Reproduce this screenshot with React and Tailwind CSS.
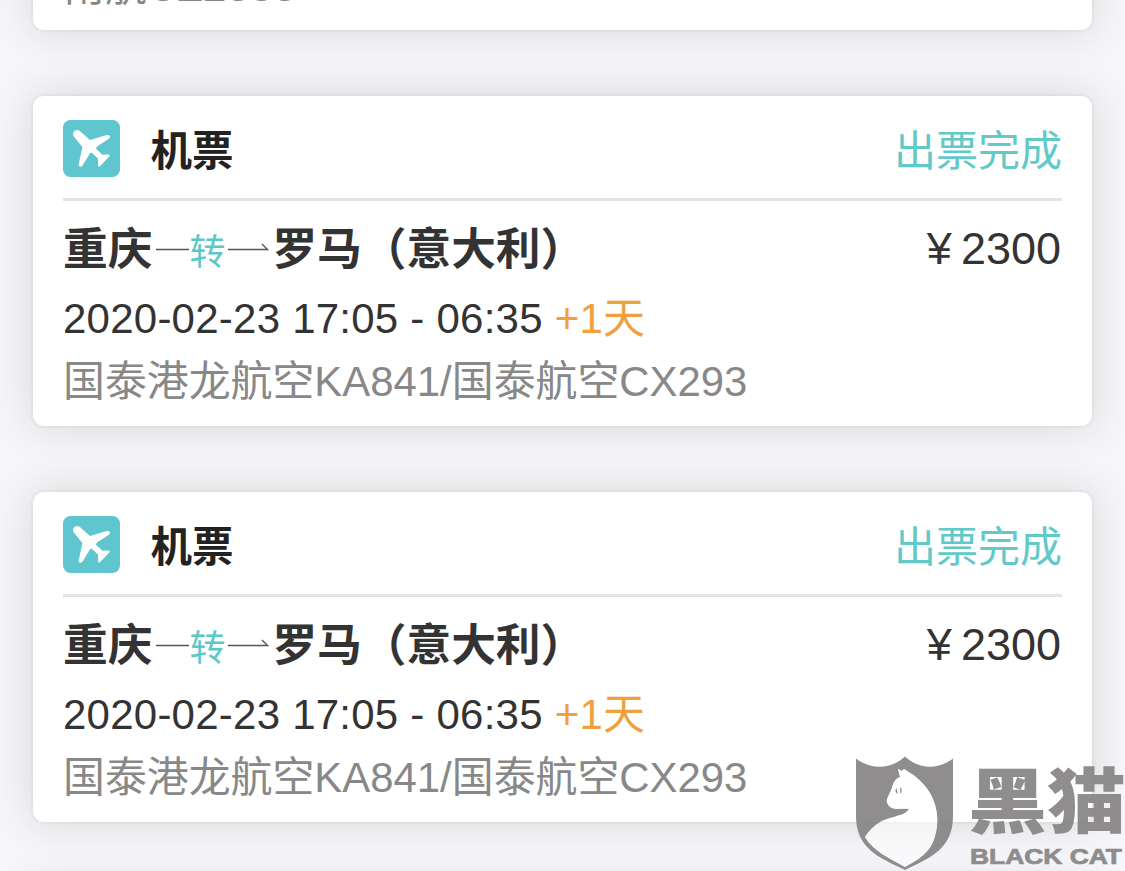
import React from 'react';

const tickets = [
    {
        id: 1,
        from: '重庆',
        to: '罗马（意大利）',
        price: '2300',
        time: '2020-02-23 17:05 - 06:35',
        airline: '国泰港龙航空KA841/国泰航空CX293'
    },
    {
        id: 2,
        from: '重庆',
        to: '罗马（意大利）',
        price: '2300',
        time: '2020-02-23 17:05 - 06:35',
        airline: '国泰港龙航空KA841/国泰航空CX293'
    }
];

const PlaneIcon = () => (
    <svg className="w-[57px] h-[57px] shrink-0" viewBox="0 0 57 57">
        <rect width="57" height="57" rx="7.5" fill="#5fc6d0" />
        <path
            d="M10.8 16.6C8.4 12.6 12.6 8.2 16.9 11L27 20L43.8 15.1C47 14.5 48.2 17.2 45.6 19L34 26.6L32.8 28.5L39.4 34.8L45.4 34.5C46.8 34.5 47 35.4 46.2 36.4L37.2 46.1C36.2 47.1 35.2 46.6 35.1 45.5L35 38.6L28.4 32.6L27 33.2L19.6 45.6C18.4 47.4 15.4 47.2 15.7 44.2L19.4 27Z"
            fill="#fff"
        />
    </svg>
);

const TransferArrow = () => (
    <div className="flex items-center ml-1 mr-[3px] text-[#5bc8c8]">
        <svg className="w-[33px] h-[16px]" viewBox="0 0 33 16" fill="none" stroke="#555" strokeWidth="1.4">
            <path d="M0 7.5H33" />
        </svg>
        <span className="text-[36px] leading-[44px] pt-[5px] -mr-px">转</span>
        <svg className="w-[41px] h-[16px] ml-1" viewBox="0 0 41 16" fill="none" stroke="#555" strokeWidth="1.4">
            <path d="M0 7.5H39.5L34 2" />
        </svg>
    </div>
);

const TicketCard = ({ ticket }) => (
    <div className="h-[330px] px-[30px] pt-6 bg-white rounded-[11px] shadow-[0_0_2px_2px_rgba(60,60,20,0.04),0_0_40px_rgba(60,60,20,0.15)]">
        <div className="flex items-start h-[78px] box-content border-b-3 border-[#e4e4e4]">
            <PlaneIcon />
            <h2 className="ml-[30.5px] pt-[3px] text-[41.5px] leading-[57px] font-bold text-[#222]">机票</h2>
            <span className="ml-auto pt-[3px] text-[42px] leading-[57px] text-[#62c9c9]">出票完成</span>
        </div>
        <div className="flex items-center justify-between h-[66px] mt-4 text-[#333]">
            <div className="flex items-center text-[44.7px] leading-[66px] font-bold">
                <span>{ticket.from}</span>
                <div className="font-normal"><TransferArrow /></div>
                <span>{ticket.to}</span>
            </div>
            <div className="mr-px mb-0.5 text-[45px] leading-[66px]">
                <span className="mr-[9px]">¥</span>{ticket.price}
            </div>
        </div>
        <p className="h-[63px] pt-1 text-[42px] leading-[63px] tracking-[0.24px] text-[#333] whitespace-nowrap">
            {ticket.time} <span className="text-[#f0a03c]">+1天</span>
        </p>
        <p className="h-[63px] pt-1 text-[41.9px] leading-[63px] text-[#888] whitespace-nowrap">{ticket.airline}</p>
    </div>
);

const Watermark = () => (
    <div className="absolute left-[856px] top-[756px] w-[269px] h-[115px] overflow-hidden opacity-95">
        <svg className="w-[269px] h-[115px]" viewBox="0 0 269 115" fill="#8a8787">
            <path
                fillRule="evenodd"
                d="M0 2.5C14 13.5 35 14 49 .5C63 14 83 13.5 97 2.5V60C97 92 76 101 49 114C22 101 0 92 0 60ZM42 13L44 21C39 23 37 27 36 32L31 43C30 47 33 51 36 52C41 54 47 52 53 53C50 58 44 59 38 61C28 63 17 68 9 81C17 95 33 102 49 111C58 106 69 100 75 90C80 81 82 69 81 59C80 46 74 33 61 22C57 18 52 16 48 13L46 15Z"
            />
            <path
                d="M42 13L44 21C39 23 37 27 36 32L31 43C30 47 33 51 36 52C41 54 47 52 53 53C50 58 44 59 38 61C28 63 17 68 9 81C17 95 33 102 49 111C58 106 69 100 75 90C80 81 82 69 81 59C80 46 74 33 61 22C57 18 52 16 48 13L46 15Z"
                fill="#fff"
                fillOpacity=".6"
            />
            <path d="M40.5 32C39 34 39 37 42 37.5C41 35.5 41 34 40.5 32ZM43.5 31.5C46.5 32 46.5 36 43.5 38C45 35 44.5 33.5 43.5 31.5Z" />
            <text x="112" y="70.5" fontSize="71" fontWeight="900" textLength="158" lengthAdjust="spacingAndGlyphs">黑猫</text>
            <text x="114" y="107.5" fontSize="22" fontWeight="700" textLength="152" lengthAdjust="spacingAndGlyphs" stroke="#8a8787" strokeWidth=".7">BLACK CAT</text>
        </svg>
    </div>
);

const App = () => {
    return (
        <div className="relative h-[871px] overflow-hidden bg-[#f5f5fa] font-['Liberation_Sans','Noto_Sans_CJK_SC',sans-serif]">
            <div className="flex flex-col gap-[66px] ml-[33px] w-[1059px] -mt-10">
                <div className="flex items-end h-[70px] px-[30px] bg-white rounded-[11px] shadow-[0_0_2px_2px_rgba(60,60,20,0.04),0_0_40px_rgba(60,60,20,0.15)]">
                    <p className="mb-[12px] text-[42px] leading-[63px] text-[#888]">南航CZ2383</p>
                </div>
                {tickets.map((ticket) => (
                    <TicketCard key={ticket.id} ticket={ticket} />
                ))}
                <div className="h-[330px] shrink-0 bg-white rounded-[11px] shadow-[0_0_2px_2px_rgba(60,60,20,0.04),0_0_40px_rgba(60,60,20,0.15)]"></div>
            </div>
            <Watermark />
        </div>
    );
};

export default App;
